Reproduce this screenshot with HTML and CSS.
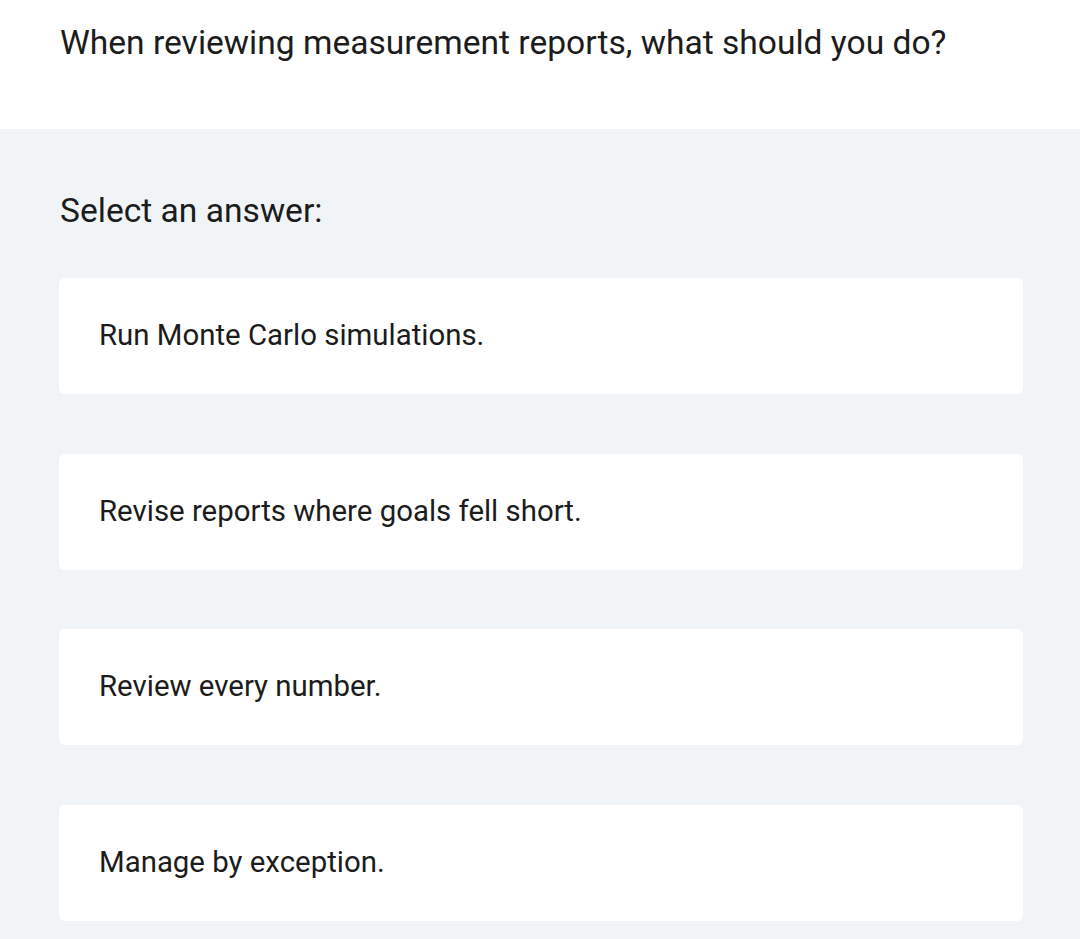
FILE: index.html
```html
<!DOCTYPE html>
<html lang="en">
<head>
<meta charset="utf-8">
<link rel="stylesheet" href="styles.css">
</head>
<body>
<header class="question">
  <h1 class="question-text">When reviewing measurement reports, what should you do?</h1>
</header>
<main class="answers">
  <p class="prompt">Select an answer:</p>
  <div class="options">
    <div class="option">Run Monte Carlo simulations.</div>
    <div class="option">Revise reports where goals fell short.</div>
    <div class="option">Review every number.</div>
    <div class="option">Manage by exception.</div>
  </div>
</main>
</body>
</html>
```

FILE: styles.css
```css
html, body {
  margin: 0;
  padding: 0;
}
body {
  font-family: Roboto, "Liberation Sans", sans-serif;
  color: #1c1c1c;
  background: #f1f4f7;
}
.question {
  background: #ffffff;
  height: 129px;
  box-sizing: border-box;
  padding: 20px 60px 0;
}
.question-text {
  margin: 0;
  font-size: 33.6px;
  font-weight: 400;
  line-height: 46px;
}
.answers {
  padding: 60px 57px 20px 59px;
}
.prompt {
  margin: 0 0 0 1px;
  font-size: 33.6px;
  line-height: 44px;
}
.options {
  display: flex;
  flex-direction: column;
  gap: 59.5px;
  margin-top: 45px;
}
.option {
  background: #ffffff;
  border-radius: 6px;
  height: 116px;
  box-sizing: border-box;
  display: flex;
  align-items: center;
  padding: 0 40px 2px;
  font-size: 29.4px;
}
```
